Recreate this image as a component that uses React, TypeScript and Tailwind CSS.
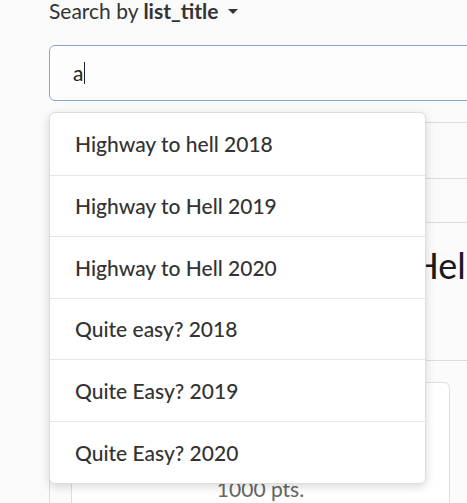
const results = [
  "Highway to hell 2018",
  "Highway to Hell 2019",
  "Highway to Hell 2020",
  "Quite easy? 2018",
  "Quite Easy? 2019",
  "Quite Easy? 2020",
];

export default function App() {
  return (
    <div className="w-[467px] h-[503px] overflow-hidden bg-[#fafafa] font-['Lato',sans-serif] text-[#333]">
      <div className="pl-[49px]">
        {/* search mode toggle */}
        <div className="h-[45px] flex items-start text-[21px] leading-[22px]">
          <span>Search by&nbsp;</span>
          <span className="font-bold">list_title</span>
          <span className="ml-[9px] mt-[9px] w-0 h-0 border-l-[5px] border-r-[5px] border-t-[5px] border-l-transparent border-r-transparent border-t-[#333]" />
        </div>

        <div className="relative w-[440px]">
          <div className="h-[56px] bg-[#fdfdfd] border border-[#84a9cf] rounded-l-[6px] flex items-center pl-[23px] text-[21px] text-[#222]">
            a<span className="w-px h-[22px] bg-[#222] ml-[1px]" />
          </div>

          {/* page content behind the dropdown */}
          <div className="mt-[21px] h-[57px] border-y border-[#ddd] bg-[#fafafa]" />
          <div className="mt-[43px] border-t border-l border-[#ddd] bg-[#fbfbfb] w-[422px]">
            <div className="h-[138px] pl-[172px] pt-[20px] text-[36px] text-[#1a1a1a] leading-[44px] whitespace-nowrap border-b border-[#ddd]">
              Highway to Hell
            </div>
            <div className="px-[21px] pt-[21px]">
              <div className="h-[200px] border border-[#ddd] rounded-[6px] bg-white pt-[90px] text-center text-[21px] text-[#666]">
                1000 pts.
              </div>
            </div>
          </div>

          {/* autocomplete dropdown */}
          <div className="absolute left-0 top-[67px] w-[377px] bg-white border border-[#ddd] rounded-[6px] shadow-[0_3px_10px_rgba(0,0,0,0.15)] overflow-hidden">
            {results.map((r, i) => (
              <div
                key={r}
                className={`h-[61.6px] flex items-center pl-[25px] text-[21px] font-medium text-[#333] ${i > 0 ? "border-t border-[#e6e6e6]" : ""}`}
              >
                {r}
              </div>
            ))}
          </div>
        </div>
      </div>
    </div>
  );
}
